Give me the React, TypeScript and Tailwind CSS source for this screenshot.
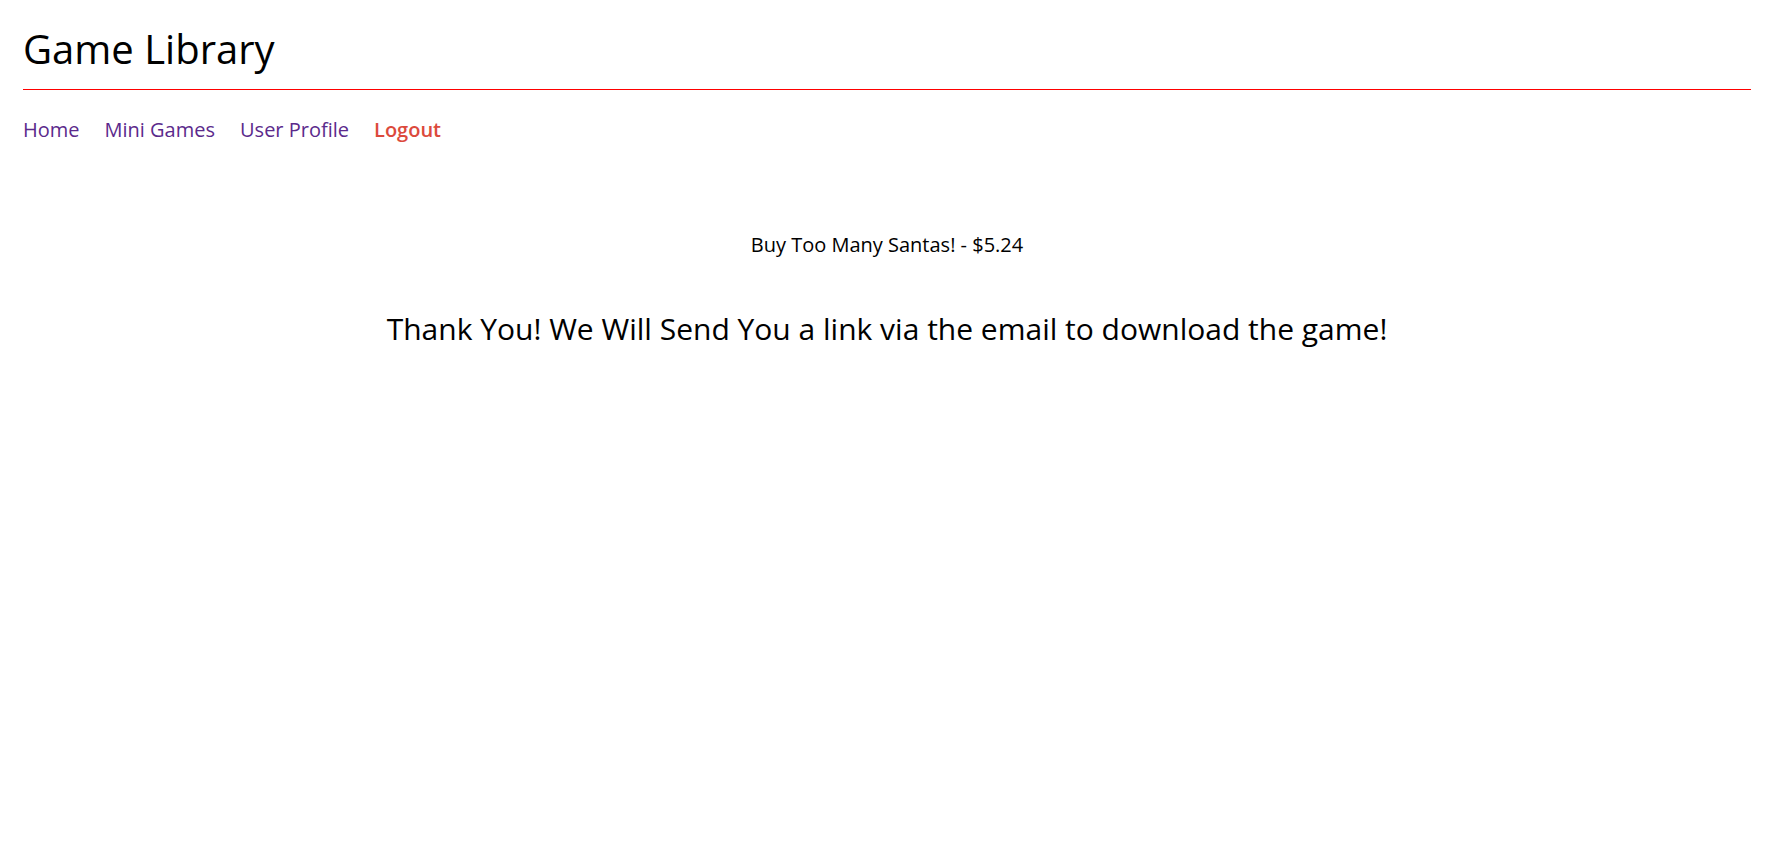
import React from 'react';

const links = ['Home', 'Mini Games', 'User Profile'];

function App() {
  return (
    <div className="min-h-screen bg-white text-black" style={{ fontFamily: '"Open Sans", sans-serif' }}>
      <div className="pl-[23px] pr-[35px]">
        <header className="pt-[22px] pb-[13px] border-b border-[#ff0000]">
          <h1 className="text-[40px] leading-[54px]">Game Library</h1>
        </header>

        <nav className="flex items-center gap-[25px] mt-[26px] text-[20px] leading-[28px]">
          {links.map((l) => (
            <a key={l} href="#" className="text-[#5b2a8c]">
              {l}
            </a>
          ))}
          <a href="#" className="text-[#dc4a3c] font-semibold">
            Logout
          </a>
        </nav>

        <main className="flex flex-col items-center mt-[87px]">
          <p className="text-[20px] leading-[28px]">Buy Too Many Santas! - $5.24</p>
          <h2 className="text-[30px] leading-[42px] mt-[49px]">
            Thank You! We Will Send You a link via the email to download the game!
          </h2>
        </main>
      </div>
    </div>
  );
}

export default App;
